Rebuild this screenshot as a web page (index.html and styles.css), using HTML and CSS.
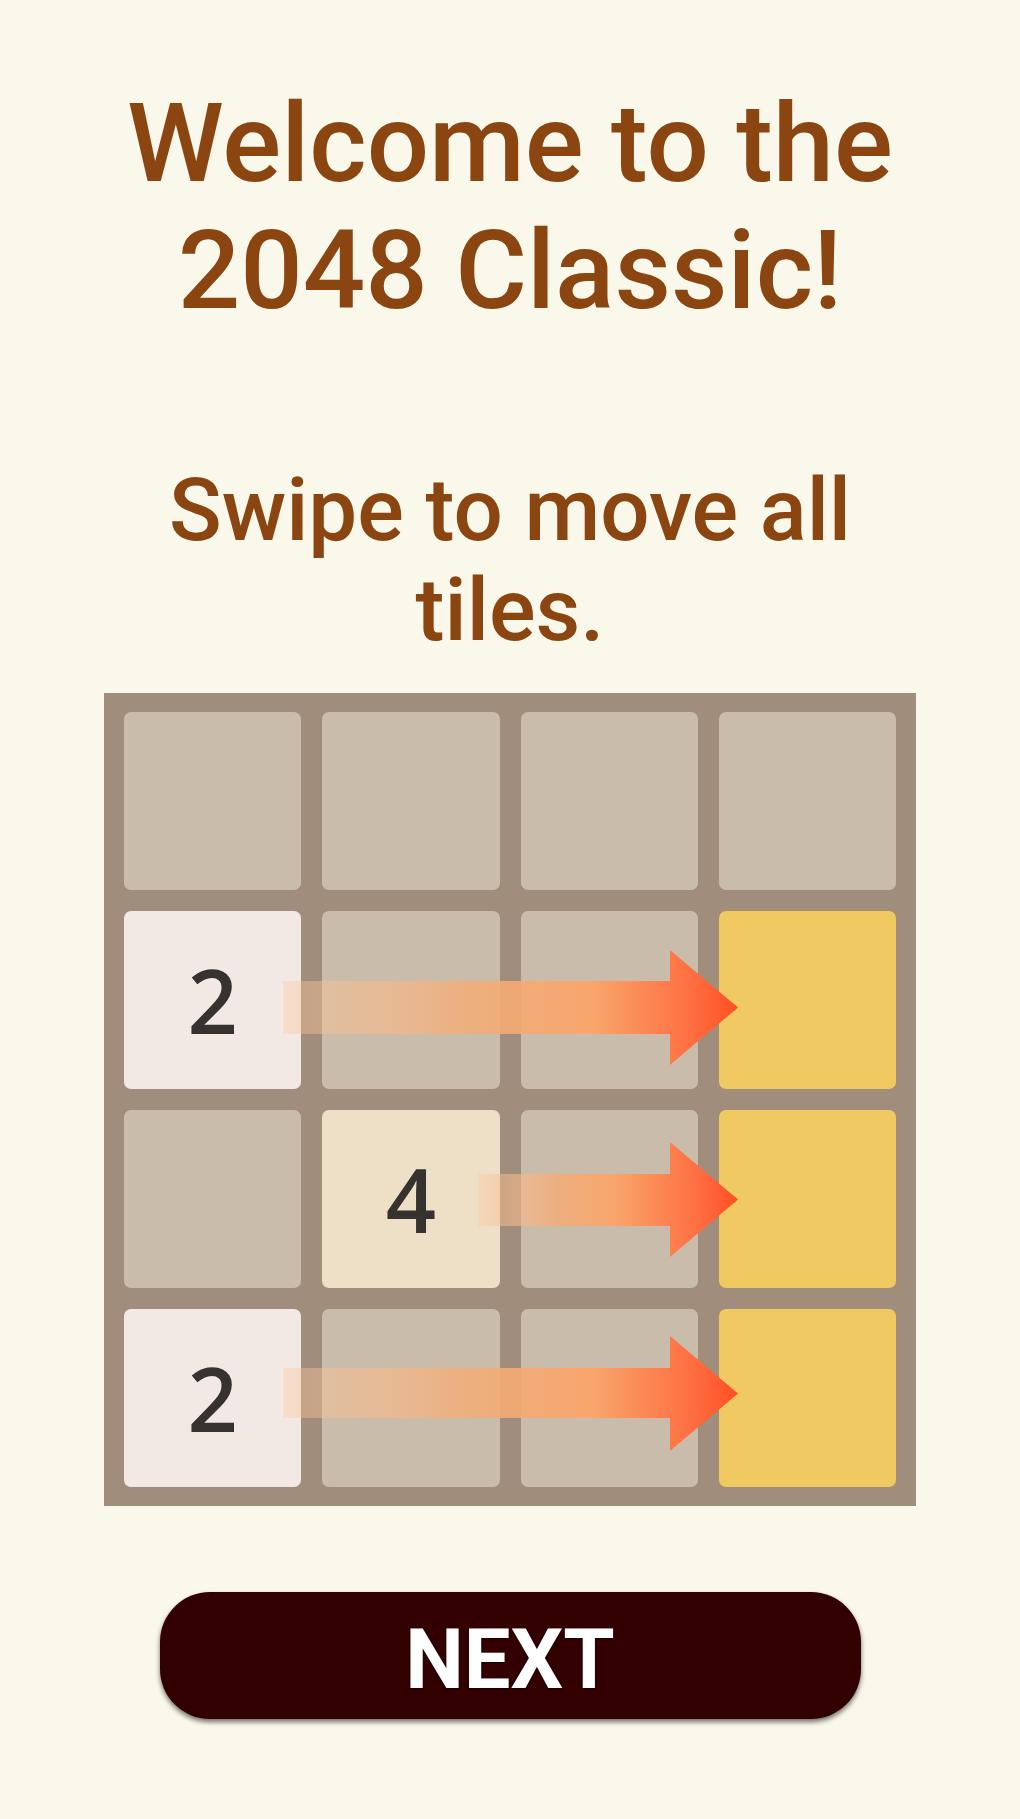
FILE: index.html
```html
<!DOCTYPE html>
<html lang="en">
<head>
<meta charset="utf-8">
<title>2048 Classic - Tutorial</title>
<link rel="stylesheet" href="styles.css">
</head>
<body>
<main class="screen">
  <h1 class="title">Welcome to the<br>2048 Classic!</h1>
  <p class="subtitle">Swipe to move all<br>tiles.</p>
  <div class="board-wrap">
    <div class="board">
      <div class="tile"></div>
      <div class="tile"></div>
      <div class="tile"></div>
      <div class="tile"></div>

      <div class="tile t2">2</div>
      <div class="tile"></div>
      <div class="tile"></div>
      <div class="tile gold"></div>

      <div class="tile"></div>
      <div class="tile t4">4</div>
      <div class="tile"></div>
      <div class="tile gold"></div>

      <div class="tile t2">2</div>
      <div class="tile"></div>
      <div class="tile"></div>
      <div class="tile gold"></div>
    </div>

    <svg class="arrow arrow-long a1" viewBox="0 0 455 115" aria-hidden="true">
      <defs>
        <linearGradient id="g1" x1="0" y1="0" x2="455" y2="0" gradientUnits="userSpaceOnUse">
          <stop offset="0" stop-color="#fcc79c" stop-opacity="0.35"/>
          <stop offset="0.4" stop-color="#f3ad78" stop-opacity="0.85"/>
          <stop offset="0.68" stop-color="#f8a66c" stop-opacity="1"/>
          <stop offset="0.9" stop-color="#ff6e40"/>
          <stop offset="1" stop-color="#ff4e22"/>
        </linearGradient>
      </defs>
      <path d="M0 31 H387 V0 L455 57.5 L387 115 V84 H0 Z" fill="url(#g1)"/>
    </svg>

    <svg class="arrow arrow-short a2" viewBox="0 0 260 115" aria-hidden="true">
      <defs>
        <linearGradient id="g2" x1="0" y1="0" x2="260" y2="0" gradientUnits="userSpaceOnUse">
          <stop offset="0" stop-color="#fcc79c" stop-opacity="0.35"/>
          <stop offset="0.3" stop-color="#f3ad78" stop-opacity="0.85"/>
          <stop offset="0.52" stop-color="#f8a66c" stop-opacity="1"/>
          <stop offset="0.85" stop-color="#ff6e40"/>
          <stop offset="1" stop-color="#ff4e22"/>
        </linearGradient>
      </defs>
      <path d="M0 32 H192 V0 L260 57.5 L192 115 V84 H0 Z" fill="url(#g2)"/>
    </svg>

    <svg class="arrow arrow-long a3" viewBox="0 0 455 115" aria-hidden="true">
      <defs>
        <linearGradient id="g3" x1="0" y1="0" x2="455" y2="0" gradientUnits="userSpaceOnUse">
          <stop offset="0" stop-color="#fcc79c" stop-opacity="0.35"/>
          <stop offset="0.4" stop-color="#f3ad78" stop-opacity="0.85"/>
          <stop offset="0.68" stop-color="#f8a66c" stop-opacity="1"/>
          <stop offset="0.9" stop-color="#ff6e40"/>
          <stop offset="1" stop-color="#ff4e22"/>
        </linearGradient>
      </defs>
      <path d="M0 32 H387 V0 L455 57.5 L387 115 V82 H0 Z" fill="url(#g3)"/>
    </svg>
  </div>

  <button class="next-btn" type="button">NEXT</button>
</main>
</body>
</html>
```

FILE: styles.css
```css
html, body {
  margin: 0;
  padding: 0;
}

body {
  background: #faf7eb;
  font-family: Roboto, "Noto Sans", "Liberation Sans", sans-serif;
}

.screen {
  display: flex;
  flex-direction: column;
  align-items: center;
  padding-top: 80px;
  min-height: 1819px;
  box-sizing: border-box;
}

.title {
  margin: 0;
  font-size: 110px;
  font-weight: 500;
  line-height: 127px;
  color: #8b4510;
  text-align: center;
}

.subtitle {
  margin: 126px 0 0;
  font-size: 87px;
  font-weight: 500;
  line-height: 100px;
  color: #8b4510;
  text-align: center;
}

.board-wrap {
  position: relative;
  margin-top: 33px;
  width: 812px;
}

.board {
  display: grid;
  grid-template-columns: repeat(4, 1fr);
  grid-auto-rows: 178px;
  gap: 21px;
  padding: 19px 20px 19px 20px;
  background: #a08d7b;
  box-sizing: border-box;
  width: 812px;
}

.tile {
  background: #c9bcab;
  border-radius: 7px;
  display: flex;
  align-items: center;
  justify-content: center;
  font-family: "Open Sans", "Noto Sans", sans-serif;
  font-weight: 600;
  font-size: 88px;
  color: #353230;
  line-height: 1;
}

.tile.t2 {
  background: #f3e9e4;
}

.tile.t4 {
  background: #ede0c7;
}

.tile.gold {
  background: #f0c960;
}

.arrow {
  position: absolute;
  height: 115px;
}

.arrow-long {
  width: 455px;
}

.arrow-short {
  width: 260px;
}

.a1 {
  left: 179px;
  top: 257px;
}

.a2 {
  left: 374px;
  top: 449px;
}

.a3 {
  left: 179px;
  top: 643px;
}

.next-btn {
  margin-top: 86px;
  width: 701px;
  height: 127px;
  border: none;
  border-radius: 50px;
  background: #320000;
  color: #ffffff;
  font-family: Roboto, "Liberation Sans", sans-serif;
  font-weight: 700;
  font-size: 83px;
  line-height: 1;
  padding: 8px 0 0;
  box-shadow: 0 3px 5px rgba(0, 0, 0, 0.55);
  text-shadow: 0 1px 2px rgba(0, 0, 0, 0.6);
  cursor: pointer;
}
```
